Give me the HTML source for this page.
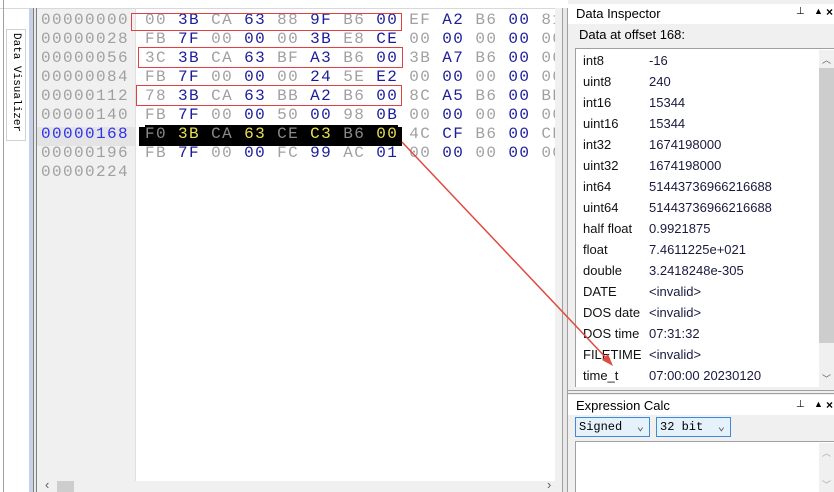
<!DOCTYPE html>
<html><head><style>
body{margin:0;width:834px;height:492px;overflow:hidden;background:#fff;position:relative;font-family:"Liberation Sans",sans-serif}
.a{position:absolute}
.mono{font-family:"Liberation Mono",monospace;font-size:16px;letter-spacing:1.4px;line-height:19px;white-space:pre}
.g{color:#a0a0a0}.b{color:#1c1c9c}
.sel{background:#000}.sel .b{color:#e8e050}.sel .g{color:#8a8a8a}
.box{position:absolute;border:1px solid #e04040}
.di{font-size:13px;color:#000}
.row{position:absolute;left:583px;height:21px;font-size:13px;color:#111}
.row span{position:absolute;left:66px;color:#1a1a40;white-space:nowrap}
</style></head><body>
<div class="a" style="left:0;top:0;width:562px;height:8px;background:#fff;border-bottom:1px solid #d8d8d8"></div>
<div class="a" style="left:3px;top:0;width:1px;height:492px;background:#a0a0a0"></div>
<div class="a" style="left:6px;top:29px;width:18px;height:110px;border:1px solid #d0d0d0;background:#fff"></div>
<div class="a" style="left:8px;top:33px;width:14px;height:100px;writing-mode:vertical-rl;font-family:'Liberation Mono',monospace;font-size:11px;color:#000">Data Visualizer</div>
<div class="a" style="left:29px;top:8px;width:4px;height:484px;background:#c8d0e8"></div>
<div class="a" style="left:33px;top:8px;width:4px;height:484px;background:#e8e8e8;border-left:1px solid #808080;border-right:1px solid #808080;box-sizing:border-box"></div>
<div class="a" style="left:37px;top:9px;width:98px;height:472px;background:#f0f0f0;border-right:1px solid #e0e0e0"></div>
<div class="a" style="left:37px;top:127px;width:98px;height:19px;background:#e4e4e4"></div>
<div class="a mono g" style="left:41px;top:11px">00000000
00000028
00000056
00000084
00000112
00000140
<span style="color:#3030f0">00000168</span>
00000196
00000224</div>
<div class="a" style="left:136px;top:9px;width:419px;height:472px;overflow:hidden">
<div class="a" style="left:3px;top:118px;width:263px;height:19px;background:#000"></div>
<div class="a mono" style="left:9px;top:2px"><span class="g">00</span> <span class="b">3B</span> <span class="g">CA</span> <span class="b">63</span> <span class="g">88</span> <span class="b">9F</span> <span class="g">B6</span> <span class="b">00</span> <span class="g">EF</span> <span class="b">A2</span> <span class="g">B6</span> <span class="b">00</span> <span class="g">81</span>
<span class="g">FB</span> <span class="b">7F</span> <span class="g">00</span> <span class="b">00</span> <span class="g">00</span> <span class="b">3B</span> <span class="g">E8</span> <span class="b">CE</span> <span class="g">00</span> <span class="b">00</span> <span class="g">00</span> <span class="b">00</span> <span class="g">00</span>
<span class="g">3C</span> <span class="b">3B</span> <span class="g">CA</span> <span class="b">63</span> <span class="g">BF</span> <span class="b">A3</span> <span class="g">B6</span> <span class="b">00</span> <span class="g">3B</span> <span class="b">A7</span> <span class="g">B6</span> <span class="b">00</span> <span class="g">00</span>
<span class="g">FB</span> <span class="b">7F</span> <span class="g">00</span> <span class="b">00</span> <span class="g">00</span> <span class="b">24</span> <span class="g">5E</span> <span class="b">E2</span> <span class="g">00</span> <span class="b">00</span> <span class="g">00</span> <span class="b">00</span> <span class="g">00</span>
<span class="g">78</span> <span class="b">3B</span> <span class="g">CA</span> <span class="b">63</span> <span class="g">BB</span> <span class="b">A2</span> <span class="g">B6</span> <span class="b">00</span> <span class="g">8C</span> <span class="b">A5</span> <span class="g">B6</span> <span class="b">00</span> <span class="g">BB</span>
<span class="g">FB</span> <span class="b">7F</span> <span class="g">00</span> <span class="b">00</span> <span class="g">50</span> <span class="b">00</span> <span class="g">98</span> <span class="b">0B</span> <span class="g">00</span> <span class="b">00</span> <span class="g">00</span> <span class="b">00</span> <span class="g">00</span>
<span class="sel"><span class="g">F0</span> <span class="b">3B</span> <span class="g">CA</span> <span class="b">63</span> <span class="g">CE</span> <span class="b">C3</span> <span class="g">B6</span> <span class="b">00</span></span> <span class="g">4C</span> <span class="b">CF</span> <span class="g">B6</span> <span class="b">00</span> <span class="g">CE</span>
<span class="g">FB</span> <span class="b">7F</span> <span class="g">00</span> <span class="b">00</span> <span class="g">FC</span> <span class="b">99</span> <span class="g">AC</span> <span class="b">01</span> <span class="g">00</span> <span class="b">00</span> <span class="g">00</span> <span class="b">00</span> <span class="g">00</span></div>
</div>
<div class="box" style="left:131px;top:13px;width:269px;height:16px"></div>
<div class="box" style="left:138px;top:47px;width:263px;height:19px"></div>
<div class="box" style="left:136px;top:85px;width:264px;height:19px"></div>
<div class="a" style="left:37px;top:481px;width:518px;height:11px;background:#f0f0f0"></div>
<div class="a" style="left:57px;top:481px;width:17px;height:11px;background:#cdcdcd"></div>
<div class="a" style="left:45px;top:477px;font-size:13px;color:#606060">‹</div>
<div class="a" style="left:547px;top:477px;font-size:13px;color:#606060">›</div>
<div class="a" style="left:555px;top:8px;width:7px;height:484px;background:#f0f0f0"></div>
<div class="a" style="left:562px;top:8px;width:6px;height:484px;background:#e8e8e8;border-left:1px solid #a0a0a0;border-right:1px solid #a0a0a0;box-sizing:border-box"></div>
<div class="a" style="left:568px;top:0;width:266px;height:492px;background:#f0f0f0"></div>
<div class="a" style="left:568px;top:4px;width:266px;height:20px;background:#fff"></div>
<div class="a di" style="left:576px;top:6px">Data Inspector</div>
<div class="a" style="left:796px;top:6px;font-size:10px">⊥</div>
<div class="a" style="left:814px;top:6px;font-size:9px">▲</div>
<div class="a" style="left:826px;top:5px;font-size:12px;font-weight:bold">×</div>
<div class="a" style="left:579px;top:27px;font-size:13px;color:#000">Data at offset 168:</div>
<div class="a" style="left:575px;top:48px;width:259px;height:339px;background:#fff;border-left:1px solid #a0a0a0;border-top:1px solid #a0a0a0;box-sizing:border-box"></div>
<div class="a" style="left:819px;top:50px;width:15px;height:337px;background:#f0f0f0"></div>
<div class="a" style="left:819px;top:68px;width:15px;height:275px;background:#cdcdcd"></div>
<div class="a" style="left:822px;top:53px;font-size:9px;color:#606060">︿</div>
<div class="a" style="left:822px;top:372px;font-size:9px;color:#606060">﹀</div>
<div class="row" style="top:53px">int8<span>-16</span></div>
<div class="row" style="top:74px">uint8<span>240</span></div>
<div class="row" style="top:95px">int16<span>15344</span></div>
<div class="row" style="top:116px">uint16<span>15344</span></div>
<div class="row" style="top:137px">int32<span>1674198000</span></div>
<div class="row" style="top:158px">uint32<span>1674198000</span></div>
<div class="row" style="top:179px">int64<span>51443736966216688</span></div>
<div class="row" style="top:200px">uint64<span>51443736966216688</span></div>
<div class="row" style="top:221px">half float<span>0.9921875</span></div>
<div class="row" style="top:242px">float<span>7.4611225e+021</span></div>
<div class="row" style="top:263px">double<span>3.2418248e-305</span></div>
<div class="row" style="top:284px">DATE<span>&lt;invalid&gt;</span></div>
<div class="row" style="top:305px">DOS date<span>&lt;invalid&gt;</span></div>
<div class="row" style="top:326px">DOS time<span>07:31:32</span></div>
<div class="row" style="top:347px">FILETIME<span>&lt;invalid&gt;</span></div>
<div class="row" style="top:368px">time_t<span>07:00:00 20230120</span></div>
<div class="a" style="left:568px;top:390px;width:266px;height:2px;border-top:1px solid #a0a0a0;border-bottom:1px solid #a0a0a0"></div>
<div class="a" style="left:568px;top:395px;width:266px;height:20px;background:#fff"></div>
<div class="a di" style="left:576px;top:398px">Expression Calc</div>
<div class="a" style="left:796px;top:399px;font-size:10px">⊥</div>
<div class="a" style="left:814px;top:399px;font-size:9px">▲</div>
<div class="a" style="left:826px;top:398px;font-size:12px;font-weight:bold">×</div>
<div class="a" style="left:575px;top:417px;width:75px;height:20px;border:1px solid #3c8ad8;background:#e5f1fb;box-sizing:border-box;font-family:'Liberation Mono',monospace;font-size:12px;padding:2px 0 0 3px">Signed<span style="position:absolute;right:5px;top:1px;color:#555">⌄</span></div>
<div class="a" style="left:656px;top:417px;width:75px;height:20px;border:1px solid #3c8ad8;background:#e5f1fb;box-sizing:border-box;font-family:'Liberation Mono',monospace;font-size:12px;padding:2px 0 0 3px">32 bit<span style="position:absolute;right:5px;top:1px;color:#555">⌄</span></div>
<div class="a" style="left:575px;top:441px;width:259px;height:51px;background:#fff;border-left:1px solid #a0a0a0;border-top:1px solid #a0a0a0;box-sizing:border-box"></div>
<div class="a" style="left:819px;top:443px;width:15px;height:49px;background:#f0f0f0"></div>
<div class="a" style="left:822px;top:446px;font-size:9px;color:#aaa">︿</div>
<div class="a" style="left:822px;top:478px;font-size:9px;color:#aaa">﹀</div>
<svg class="a" style="left:0;top:0" width="834" height="492"><line x1="402" y1="142" x2="609" y2="361" stroke="#e04a40" stroke-width="1.5"/><polygon points="613,366 602,360 608,354" fill="#e04a40"/></svg>
</body></html>
